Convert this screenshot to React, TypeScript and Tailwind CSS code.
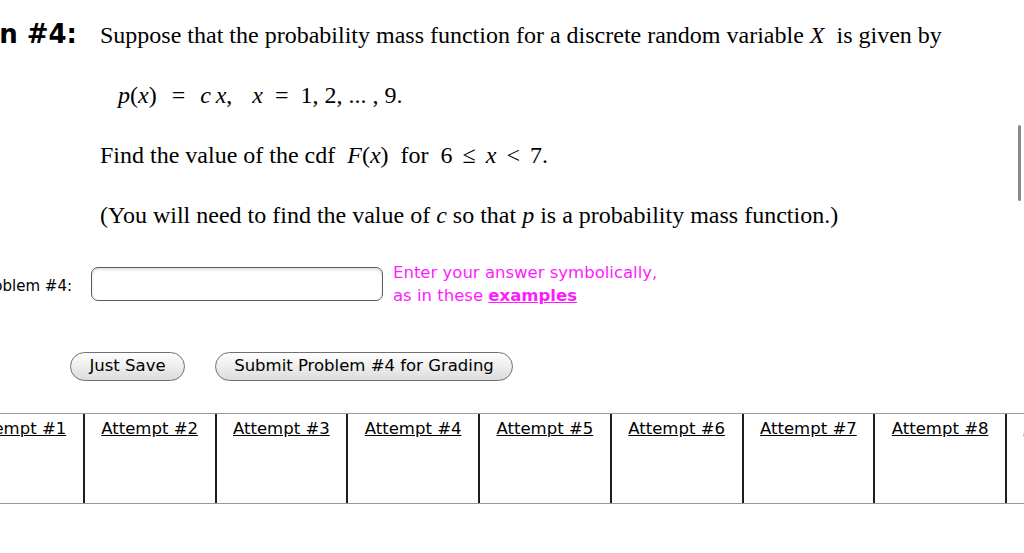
import React from "react";

const serif = { fontFamily: '"Liberation Serif", "Times New Roman", serif' };
const sans = { fontFamily: '"DejaVu Sans", Verdana, sans-serif' };

export default function App() {
  const attempts = [1, 2, 3, 4, 5, 6, 7, 8, 9];
  return (
    <div className="relative w-[1024px] h-[553px] overflow-hidden bg-white text-black">
      <div className="flex flex-col">
        {/* Problem statement */}
        <div className="flex items-baseline -ml-[220px] pt-[5px]">
          <div className="w-[297px] shrink-0 text-right font-bold text-[26px] leading-[30px]" style={sans}>
            Question #4:
          </div>
          <div className="pl-[23px] text-[24px] leading-[60px]" style={serif}>
            <div>
              Suppose that the probability mass function for a discrete random variable <i>X</i>&nbsp; is given by
            </div>
            <div className="pl-[18px]">
              <i>p</i>(<i>x</i>)<span className="mx-[15px]">=</span>
              <i>c</i>&thinsp;<i>x</i>,<span className="ml-[20px]"><i>x</i></span>
              <span className="mx-[12px]">=</span>1, 2, ... , 9.
            </div>
            <div>
              Find the value of the cdf&nbsp; <i>F</i>(<i>x</i>)&nbsp; for&nbsp; 6&nbsp;<span className="mx-[4px]">≤</span>&nbsp;<i>x</i>&nbsp;<span className="mx-[4px]">&lt;</span>&nbsp;7.
            </div>
            <div>
              (You will need to find the value of <i>c</i> so that <i>p</i> is a probability mass function.)
            </div>
          </div>
        </div>

        {/* Answer row */}
        <div className="flex items-center -ml-[220px] mt-[16px]" style={sans}>
          <div className="w-[292px] shrink-0 text-right text-[15px] mt-[5px]">Problem #4:</div>
          <div className="ml-[19px] w-[292px] h-[34px] shrink-0 rounded-[7px] border border-[#5a5a5a] bg-white shadow-[inset_0_2px_3px_rgba(0,0,0,0.12)]" />
          <div className="ml-[10px] text-[16.5px] leading-[23px] text-[#ff1aff]">
            <div>Enter your answer symbolically,</div>
            <div>
              as in these <span className="font-bold underline">examples</span>
            </div>
          </div>
        </div>

        {/* Buttons */}
        <div className="flex items-center gap-[30px] ml-[70px] mt-[45px]" style={sans}>
          <div className="w-[115px] h-[29px] flex items-center justify-center rounded-full border border-[#6f6f6f] bg-gradient-to-b from-white to-[#dcdcdc] text-[16.5px]">
            Just Save
          </div>
          <div className="w-[298px] h-[29px] flex items-center justify-center rounded-full border border-[#6f6f6f] bg-gradient-to-b from-white to-[#dcdcdc] text-[16.5px]">
            Submit Problem #4 for Grading
          </div>
        </div>

        {/* Attempts table */}
        <div className="flex -ml-[47px] mt-[32px] h-[91px] border-y border-[#9a9a9a] w-[1200px]" style={sans}>
          {attempts.map((n) => (
            <div
              key={n}
              className="w-[131.75px] shrink-0 border-r-2 border-[#1e1e1e] pt-[3px] text-center text-[16.5px]"
            >
              <span className="underline">Attempt #{n}</span>
            </div>
          ))}
        </div>
      </div>

      {/* overlay scrollbar */}
      <div className="absolute right-[3px] top-[125px] w-[3px] h-[76px] rounded-full bg-[#8a8a8a]" />
    </div>
  );
}
